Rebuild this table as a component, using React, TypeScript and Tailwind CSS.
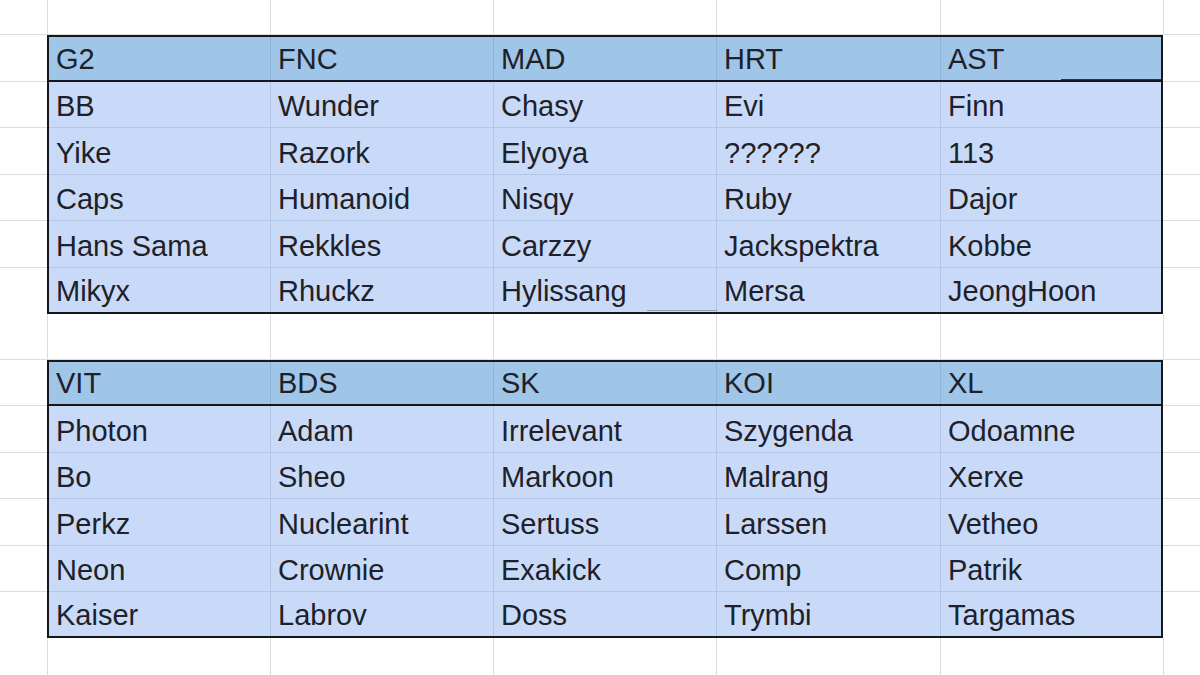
import React from "react";

const t1 = [
  ["G2", "FNC", "MAD", "HRT", "AST"],
  ["BB", "Wunder", "Chasy", "Evi", "Finn"],
  ["Yike", "Razork", "Elyoya", "??????", "113"],
  ["Caps", "Humanoid", "Nisqy", "Ruby", "Dajor"],
  ["Hans Sama", "Rekkles", "Carzzy", "Jackspektra", "Kobbe"],
  ["Mikyx", "Rhuckz", "Hylissang", "Mersa", "JeongHoon"],
];

const t2 = [
  ["VIT", "BDS", "SK", "KOI", "XL"],
  ["Photon", "Adam", "Irrelevant", "Szygenda", "Odoamne"],
  ["Bo", "Sheo", "Markoon", "Malrang", "Xerxe"],
  ["Perkz", "Nuclearint", "Sertuss", "Larssen", "Vetheo"],
  ["Neon", "Crownie", "Exakick", "Comp", "Patrik"],
  ["Kaiser", "Labrov", "Doss", "Trymbi", "Targamas"],
];

function BlankRow({ h, last }: { h: number; last?: boolean }) {
  const b = last ? "" : "border-b";
  return (
    <div className="flex" style={{ height: h }}>
      <div className={`w-[48px] shrink-0 border-r border-[#dcdcdc] ${b}`} />
      <div className={`w-[223px] shrink-0 border-r border-[#dcdcdc] ${b}`} />
      <div className={`w-[223px] shrink-0 border-r border-[#dcdcdc] ${b}`} />
      <div className={`w-[223px] shrink-0 border-r border-[#dcdcdc] ${b}`} />
      <div className={`w-[224px] shrink-0 border-r border-[#dcdcdc] ${b}`} />
      <div className={`w-[223px] shrink-0 border-r border-[#dcdcdc] ${b}`} />
      <div className={`flex-1 border-[#dcdcdc] ${b}`} />
    </div>
  );
}

function SideCells({ heights, className }: { heights: number[]; className: string }) {
  return (
    <div className={`flex flex-col ${className}`}>
      {heights.map((h, i) => (
        <div
          key={i}
          className={i === heights.length - 1 ? "" : "border-b border-[#dcdcdc]"}
          style={{ height: h }}
        />
      ))}
    </div>
  );
}

function Table({
  rows,
  heights,
  hyl,
  ast,
}: {
  rows: string[][];
  heights: number[];
  hyl?: boolean;
  ast?: boolean;
}) {
  const total = heights.reduce((a, b) => a + b, 0);
  return (
    <div className="flex" style={{ height: total }}>
      <SideCells heights={heights} className="w-[47px] shrink-0" />
      <div className="w-[1116px] shrink-0 border-2 border-[#15171c] flex flex-col">
        {rows.map((r, i) => {
          const isHead = i === 0;
          const isLast = i === rows.length - 1;
          let h = heights[i];
          if (i === 0) h -= 2;
          if (isLast) h -= 2;
          return (
            <div
              key={i}
              className={`grid grid-cols-[222px_223px_223px_224px_1fr] ${
                isHead
                  ? "bg-[#9fc5e8] border-b-2 border-[#15171c]"
                  : isLast
                  ? "bg-[#c9daf8]"
                  : "bg-[#c9daf8] border-b border-[#b3c6e6]"
              }`}
              style={{ height: h }}
            >
              {r.map((c, j) => (
                <div
                  key={j}
                  className={`relative flex items-end pl-[7px] pb-[6px] text-[29px] leading-none text-[#202128] ${
                    j < 4 ? (isHead ? "border-r border-[#8fb3d9]" : "border-r border-[#b3c6e6]") : ""
                  }`}
                >
                  <span>{c}</span>
                  {isHead && ast && j === 4 && (
                    <div className="absolute right-0 bottom-0 w-[100px] h-px bg-[#2d3447]" />
                  )}
                  {isLast && hyl && j === 2 && (
                    <div className="absolute right-[-1px] bottom-[1px] w-[70px] h-px bg-[#8d9db8]" />
                  )}
                </div>
              ))}
            </div>
          );
        })}
      </div>
      <SideCells heights={heights} className="flex-1" />
    </div>
  );
}

export default function App() {
  return (
    <div className="w-[1200px] h-[675px] bg-white overflow-hidden font-['Liberation_Sans',Arial,sans-serif]">
      <BlankRow h={35} />
      <Table rows={t1} heights={[47, 46, 47, 46, 47, 46]} hyl ast />
      <BlankRow h={46} />
      <Table rows={t2} heights={[46, 47, 46, 47, 46, 46]} />
      <BlankRow h={37} last />
    </div>
  );
}
